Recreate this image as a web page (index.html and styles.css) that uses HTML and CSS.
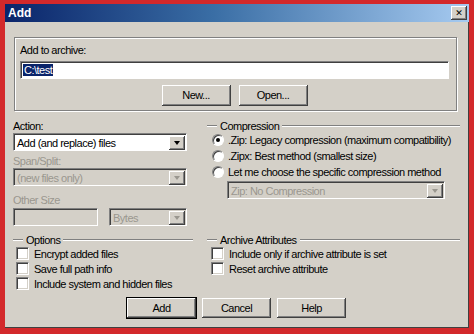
FILE: index.html
```html
<!DOCTYPE html>
<html lang="en">
<head>
    <meta charset="UTF-8">
    <title>Add</title>
    <link rel="stylesheet" href="styles.css">
</head>
<body>
    <div class="window">
        <div class="titlebar">
            <span class="title">Add</span>
            <span class="close-btn">&#x2715;</span>
        </div>
        <div class="content">
            <div class="archive-box">
                <div class="label">Add to archive:</div>
                <div class="textbox"><span class="selected">C:\test</span></div>
                <div class="archive-buttons">
                    <div class="button">New...</div>
                    <div class="button">Open...</div>
                </div>
            </div>

            <div class="middle">
                <div class="left-col">
                    <div class="label">Action:</div>
                    <div class="select">
                        <span class="select-text">Add (and replace) files</span>
                        <span class="arrow"></span>
                    </div>
                    <div class="label disabled">Span/Split:</div>
                    <div class="select off split">
                        <span class="select-text">(new files only)</span>
                        <span class="arrow"></span>
                    </div>
                    <div class="label disabled">Other Size</div>
                    <div class="size-row">
                        <div class="textbox off small"></div>
                        <div class="select off">
                            <span class="select-text">Bytes</span>
                            <span class="arrow"></span>
                        </div>
                    </div>
                </div>
                <div class="right-col">
                    <div class="group-title">Compression</div>
                    <div class="option"><span class="radio checked"></span>.Zip: Legacy compression (maximum compatibility)</div>
                    <div class="option"><span class="radio"></span>.Zipx: Best method (smallest size)</div>
                    <div class="option"><span class="radio"></span>Let me choose the specific compression method</div>
                    <div class="select off method">
                        <span class="select-text">Zip: No Compression</span>
                        <span class="arrow"></span>
                    </div>
                </div>
            </div>

            <div class="bottom">
                <div>
                    <div class="group-title">Options</div>
                    <div class="option check-row"><span class="checkbox"></span>Encrypt added files</div>
                    <div class="option check-row"><span class="checkbox"></span>Save full path info</div>
                    <div class="option check-row"><span class="checkbox"></span>Include system and hidden files</div>
                </div>
                <div>
                    <div class="group-title">Archive Attributes</div>
                    <div class="option check-row"><span class="checkbox"></span>Include only if archive attribute is set</div>
                    <div class="option check-row"><span class="checkbox"></span>Reset archive attribute</div>
                </div>
            </div>

            <div class="dialog-buttons">
                <div class="button default">Add</div>
                <div class="button">Cancel</div>
                <div class="button">Help</div>
            </div>
        </div>
    </div>
</body>
</html>
```

FILE: styles.css
```css
body {
    margin: 0;
    background-color: #d3292b;
    font-family: 'Liberation Sans', 'DejaVu Sans', sans-serif;
    font-size: 11px;
    letter-spacing: -0.5px;
    color: #000;
}
.window {
    margin: 4px 0 0 5px;
    width: 464px;
    height: 324px;
    background-color: #d4d0c8;
    box-shadow: inset -1px -1px 0 #404040;
}
.titlebar {
    height: 18px;
    display: flex;
    align-items: center;
    justify-content: space-between;
    padding: 0 2px 0 3px;
    background: linear-gradient(to right, #0a246a, #3a6ea5 45%, #a6caf0);
}
.title {
    color: white;
    font-weight: bold;
    font-size: 12px;
    letter-spacing: 0;
}
.close-btn {
    width: 16px;
    height: 14px;
    background-color: #d4d0c8;
    box-shadow: inset -1px -1px 0 #404040, inset 1px 1px 0 #fff, inset -2px -2px 0 #808080;
    font-size: 9px;
    font-weight: bold;
    line-height: 14px;
    text-align: center;
    letter-spacing: 0;
}
.content {
    padding: 0 9px 0 8px;
}
.label {
    height: 13px;
    line-height: 13px;
}
.disabled {
    color: #9a978f;
}
.archive-box {
    margin: 15px 3px 0 1px;
    padding: 6px 7px 4px 5px;
    border: 1px solid #808080;
    box-shadow: 1px 1px 0 #fff, inset 1px 1px 0 #fff;
}
.textbox {
    height: 18px;
    margin-top: 4px;
    background-color: white;
    box-sizing: border-box;
    border: 1px solid;
    border-color: #808080 #fff #fff #808080;
    box-shadow: inset 1px 1px 0 #404040;
    padding: 2px 2px 0;
}
.selected {
    background-color: #0a246a;
    color: white;
    padding: 0 1px;
}
.archive-buttons, .dialog-buttons {
    display: flex;
    justify-content: center;
    gap: 8px;
    margin-top: 6px;
}
.button {
    width: 69px;
    height: 21px;
    line-height: 21px;
    text-align: center;
    background-color: #d4d0c8;
    box-shadow: inset -1px -1px 0 #404040, inset 1px 1px 0 #fff, inset -2px -2px 0 #808080;
}
.button.default {
    box-shadow: 0 0 0 1px #000, inset -1px -1px 0 #404040, inset 1px 1px 0 #fff, inset -2px -2px 0 #808080;
}
.middle {
    display: grid;
    grid-template-columns: 174px 1fr;
    column-gap: 20px;
    margin-top: 9px;
}
.select {
    display: flex;
    align-items: center;
    height: 18px;
    box-sizing: border-box;
    border: 1px solid;
    border-color: #808080 #fff #fff #808080;
    box-shadow: inset 1px 1px 0 #404040;
    background-color: white;
    padding: 1px 1px 0 3px;
    margin-bottom: 4px;
}
.select.split {
    margin-bottom: 8px;
}
.select-text {
    flex: 1;
}
.arrow {
    width: 16px;
    height: 14px;
    background-color: #d4d0c8;
    box-shadow: inset -1px -1px 0 #404040, inset 1px 1px 0 #fff, inset -2px -2px 0 #808080;
    position: relative;
}
.arrow::after {
    content: '';
    position: absolute;
    left: 5px;
    top: 5px;
    border-left: 3.5px solid transparent;
    border-right: 3.5px solid transparent;
    border-top: 4px solid #000;
}
.select.off {
    background-color: #d4d0c8;
    color: #9a978f;
}
.select.off .arrow::after {
    border-top-color: #9a978f;
}
.size-row {
    display: grid;
    grid-template-columns: 85px 78px;
    column-gap: 11px;
    margin-top: 1px;
}
.size-row .select {
    margin-bottom: 0;
}
.textbox.small {
    margin-top: 0;
    height: 18px;
    background-color: #d4d0c8;
}
.group-title {
    display: flex;
    align-items: center;
    gap: 3px;
    height: 13px;
}
.group-title::before, .group-title::after {
    content: '';
    height: 0;
    border-top: 1px solid #808080;
    border-bottom: 1px solid #fff;
}
.group-title::before {
    width: 10px;
}
.group-title::after {
    flex: 1;
}
.right-col .group-title {
    margin-top: -1px;
}
.option {
    display: flex;
    align-items: center;
    height: 16px;
    padding-left: 5px;
    white-space: nowrap;
}
.radio {
    width: 12px;
    height: 12px;
    box-sizing: border-box;
    border-radius: 50%;
    border: 1px solid;
    border-color: #808080 #fff #fff #808080;
    box-shadow: inset 1px 1px 0 #404040;
    background-color: white;
    margin-right: 4px;
    position: relative;
}
.radio.checked::after {
    content: '';
    position: absolute;
    left: 3px;
    top: 3px;
    width: 4px;
    height: 4px;
    border-radius: 50%;
    background-color: #000;
}
.method {
    margin: 1px 15px 0 20px;
}
.bottom {
    display: grid;
    grid-template-columns: 180px 1fr;
    column-gap: 14px;
    margin-top: 7px;
}
.check-row {
    height: 15px;
    padding-left: 3px;
}
.bottom > div:last-child .check-row {
    padding-left: 4px;
}
.checkbox {
    width: 13px;
    height: 13px;
    box-sizing: border-box;
    border: 1px solid;
    border-color: #808080 #fff #fff #808080;
    box-shadow: inset 1px 1px 0 #404040, inset -1px -1px 0 #d4d0c8;
    background-color: white;
    margin-right: 5px;
}
.dialog-buttons {
    gap: 6px;
    margin-top: 7px;
}
.dialog-buttons .button {
    height: 20px;
    line-height: 20px;
}
```
